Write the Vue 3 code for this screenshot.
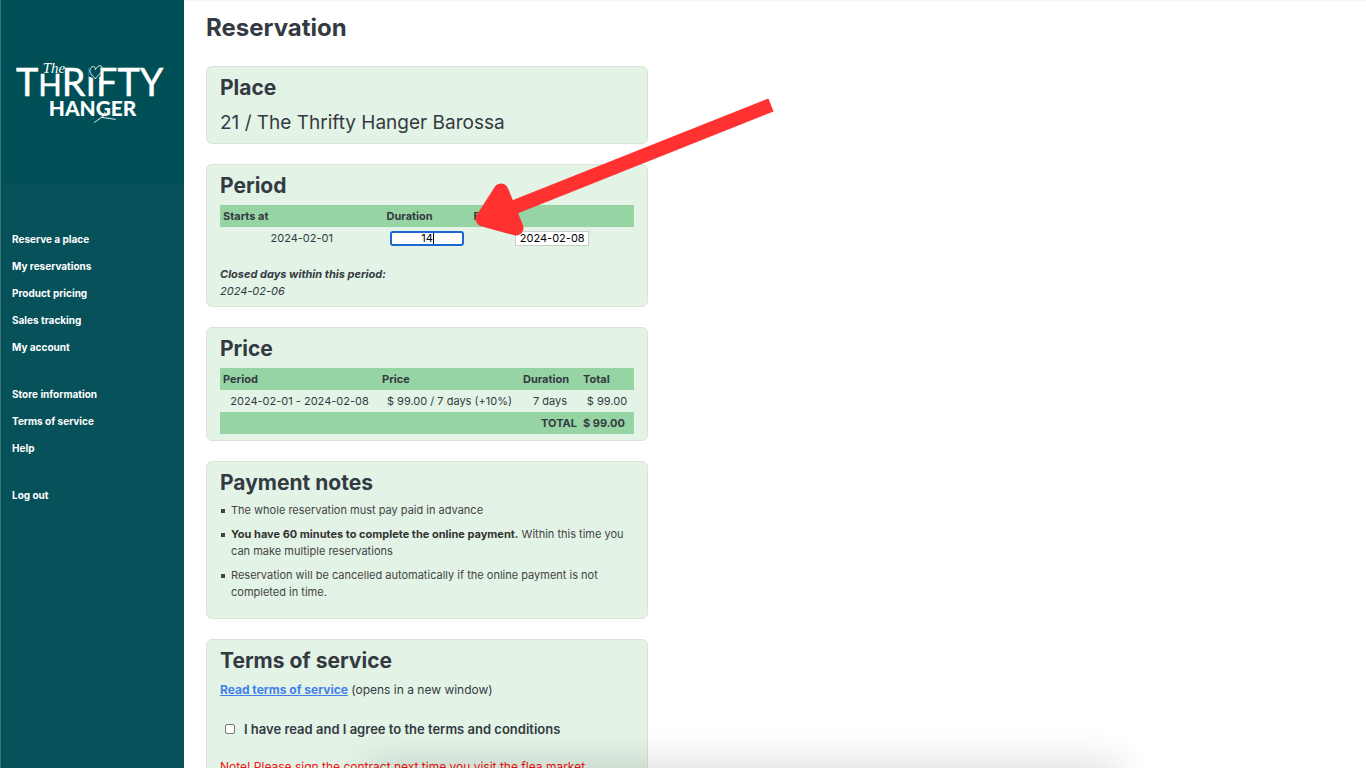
<script setup>
import { ref, onMounted } from 'vue'

const navGroups = [
  ['Reserve a place', 'My reservations', 'Product pricing', 'Sales tracking', 'My account'],
  ['Store information', 'Terms of service', 'Help'],
  ['Log out'],
]
const duration = ref('14')
const endDate = ref('2024-02-08')
const agreed = ref(false)
const durationInput = ref(null)

onMounted(() => {
  durationInput.value.focus()
  durationInput.value.setSelectionRange(2, 2)
})
</script>

<template>
  <div class="page">
    <aside class="sidebar">
      <div class="brand">
        <svg class="logo" viewBox="0 0 184 184" role="img" aria-label="The Thrifty Hanger">
          <g fill="#fff">
            <text x="42" y="73" class="logo-the">The</text>
            <text x="15" y="97" class="logo-thrifty">T<tspan class="logo-small">H</tspan>RIFTY</text>
            <text x="48" y="117" class="logo-hanger">HANGER</text>
          </g>
          <path class="logo-gap" d="M88 65h12v12l-6 2-6-2z" />
          <path class="logo-line" d="M95 79c-4-3-7-7-5-10 1-3 5-3 5 1 2-5 7-5 7-1 0 4-5 7-7 10" />
          <path class="logo-line" d="M94 123l10-7c2-2 1-3 0-3M101 118l14 2" />
        </svg>
      </div>
      <nav class="nav">
        <ul v-for="(group, i) in navGroups" :key="i">
          <li v-for="item in group" :key="item"><a href="#">{{ item }}</a></li>
        </ul>
      </nav>
    </aside>

    <main class="content">
      <h1>Reservation</h1>

      <section class="card place">
        <h2>Place</h2>
        <p class="place-name">21 / The Thrifty Hanger Barossa</p>
      </section>

      <section class="card period">
        <h2>Period</h2>
        <div class="period-body">
          <table>
            <colgroup><col /><col class="p-mid" /><col /></colgroup>
            <thead>
              <tr><th>Starts at</th><th id="dur">Duration</th><th id="end">Ends at</th></tr>
            </thead>
            <tbody>
              <tr>
                <td>2024-02-01</td>
                <td>
                  <div class="field-wrap">
                    <input ref="durationInput" v-model="duration" class="field duration" type="text" aria-labelledby="dur" />
                    <span class="caret"></span>
                  </div>
                </td>
                <td><input v-model="endDate" class="field" type="text" aria-labelledby="end" /></td>
              </tr>
            </tbody>
          </table>
          <svg class="arrow" viewBox="0 0 302 142" aria-hidden="true">
            <path d="M299 7L30 114" class="shaft" />
            <path d="M29 93L11 121L44 130Z" class="head" />
          </svg>
        </div>
        <p class="closed"><strong>Closed days within this period:</strong><br />2024-02-06</p>
      </section>

      <section class="card price">
        <h2>Price</h2>
        <table>
          <colgroup><col class="c-period" /><col class="c-price" /><col class="c-dur" /><col /></colgroup>
          <thead>
            <tr><th>Period</th><th>Price</th><th>Duration</th><th>Total</th></tr>
          </thead>
          <tbody>
            <tr>
              <td>2024-02-01 - 2024-02-08</td>
              <td>$ 99.00 / 7 days (+10%)</td>
              <td>7 days</td>
              <td>$ 99.00</td>
            </tr>
          </tbody>
          <tfoot>
            <tr><th colspan="3" class="sum-label">TOTAL</th><th>$ 99.00</th></tr>
          </tfoot>
        </table>
      </section>

      <section class="card notes">
        <h2>Payment notes</h2>
        <ul>
          <li>The whole reservation must pay paid in advance</li>
          <li><strong>You have 60 minutes to complete the online payment.</strong> Within this time you can make multiple reservations</li>
          <li>Reservation will be cancelled automatically if the online payment is not completed in time.</li>
        </ul>
      </section>

      <section class="card terms">
        <h2>Terms of service</h2>
        <p><a href="#">Read terms of service</a> (opens in a new window)</p>
        <label class="agree">
          <input v-model="agreed" type="checkbox" />
          I have read and I agree to the terms and conditions
        </label>
        <p class="warning">Note! Please sign the contract next time you visit the flea market</p>
      </section>
    </main>
    <div class="dock-shadow"></div>
  </div>
</template>

<style>
html,
body {
  margin: 0;
  background: #fff;
}
</style>

<style scoped>
* {
  box-sizing: border-box;
}
.page {
  position: relative;
  display: flex;
  height: 100vh;
  overflow: hidden;
  font-family: Inter, "Liberation Sans", sans-serif;
  font-size: 11px;
  line-height: 17px;
  color: #343a42;
}
.sidebar {
  flex: 0 0 184px;
  background: #07515a;
  border-left: 1px solid #38727a;
}
.brand {
  background: #004f56;
}
.logo {
  display: block;
  width: 100%;
}
.logo-the {
  font: italic 15px "Liberation Serif", serif;
}
.logo-thrifty {
  font: 38px Lato, sans-serif;
  stroke: #fff;
  stroke-width: 0.5;
}
.logo-small {
  font-size: 31px;
}
.logo-hanger {
  font: 900 21px Lato, sans-serif;
}
.logo-gap {
  fill: #004f56;
}
.logo-line {
  fill: none;
  stroke: #e8f2f1;
  stroke-width: 1;
  stroke-linecap: round;
}
.nav {
  padding: 43px 11px;
}
.nav ul {
  list-style: none;
  margin: 0 0 20px;
  padding: 0;
}
.nav li {
  height: 27px;
  font-size: 10px;
  line-height: 27px;
}
.nav a {
  color: #fff;
  font-weight: 700;
  text-decoration: none;
}
.content {
  flex: 1;
  min-width: 0;
  padding: 0 22px;
  border-top: 1px solid #f3f7f7;
}
h1,
h2,
p {
  margin: 0;
}
h1 {
  height: 65px;
  font-size: 24px;
  line-height: 54px;
  font-weight: 700;
}
h2 {
  font-size: 21px;
  line-height: 28px;
  font-weight: 700;
}
.card {
  max-width: 442px;
  margin-bottom: 20px;
  padding: 7px 13px 6px;
  background: #e3f3e6;
  border: 1px solid #d9e3da;
  border-radius: 6px;
}
.place {
  padding-bottom: 4px;
}
.place-name {
  padding-top: 5px;
  font-size: 19px;
  line-height: 32px;
}
.period-body {
  position: relative;
}
table {
  width: 100%;
  margin-top: 5px;
  table-layout: fixed;
  border-collapse: collapse;
}
.p-mid {
  width: 21%;
}
.c-period {
  width: 159px;
}
.c-price {
  width: 141px;
}
.c-dur {
  width: 60px;
}
th,
td {
  height: 22px;
  padding: 0 3px;
}
th {
  background: #96d4a4;
  text-align: left;
  font-weight: 700;
}
td {
  text-align: center;
}
.sum-label {
  text-align: right;
}
.field-wrap {
  position: relative;
}
.field {
  display: block;
  width: 74px;
  height: 15px;
  margin: 0 auto;
  padding: 0;
  border: 1px solid #c8cfc9;
  background: #fff;
  color: #000;
  font: 11px Inter, sans-serif;
  text-align: center;
}
.duration {
  border: 2px solid #1f66d0;
  border-radius: 3px;
  outline: none;
  caret-color: transparent;
}
.caret {
  position: absolute;
  left: calc(50% + 6px);
  top: 2px;
  width: 1px;
  height: 11px;
  background: #000;
}
.closed {
  margin-top: 17px;
  font-style: italic;
}
.arrow {
  position: absolute;
  left: 252px;
  top: -107px;
  width: 302px;
  height: 142px;
  overflow: visible;
  pointer-events: none;
}
.shaft {
  stroke: #ff3131;
  stroke-width: 14;
}
.head {
  fill: #ff3131;
  stroke: #ff3131;
  stroke-width: 15;
  stroke-linejoin: round;
}
.notes {
  padding-bottom: 10px;
}
.notes ul {
  margin: 5px 0 0;
  padding: 0 0 0 11px;
  list-style: none;
}
.notes li {
  position: relative;
  margin-bottom: 7px;
  color: #444;
}
.notes li::before {
  content: "";
  position: absolute;
  left: -10px;
  top: 7px;
  width: 4px;
  height: 4px;
  background: #444;
}
.notes strong {
  color: #333;
}
.terms {
  height: 170px;
  font-size: 12px;
  line-height: 20px;
}
.terms h2 + p {
  padding-top: 5px;
}
.terms a {
  color: #4080ee;
  font-weight: 700;
}
.agree {
  display: flex;
  align-items: center;
  gap: 9px;
  margin: 19px 0 18px;
  padding-left: 5px;
  font-size: 13px;
  font-weight: 600;
}
.agree input {
  appearance: none;
  width: 10px;
  height: 10px;
  margin: 0;
  background: #fff;
  border: 1px solid #777;
  border-radius: 2px;
}
.warning {
  color: #f01414;
}
.dock-shadow {
  position: absolute;
  left: 370px;
  right: 250px;
  bottom: -20px;
  height: 20px;
  box-shadow: 0 0 36px 4px rgba(0, 0, 0, 0.16);
  pointer-events: none;
}
</style>
